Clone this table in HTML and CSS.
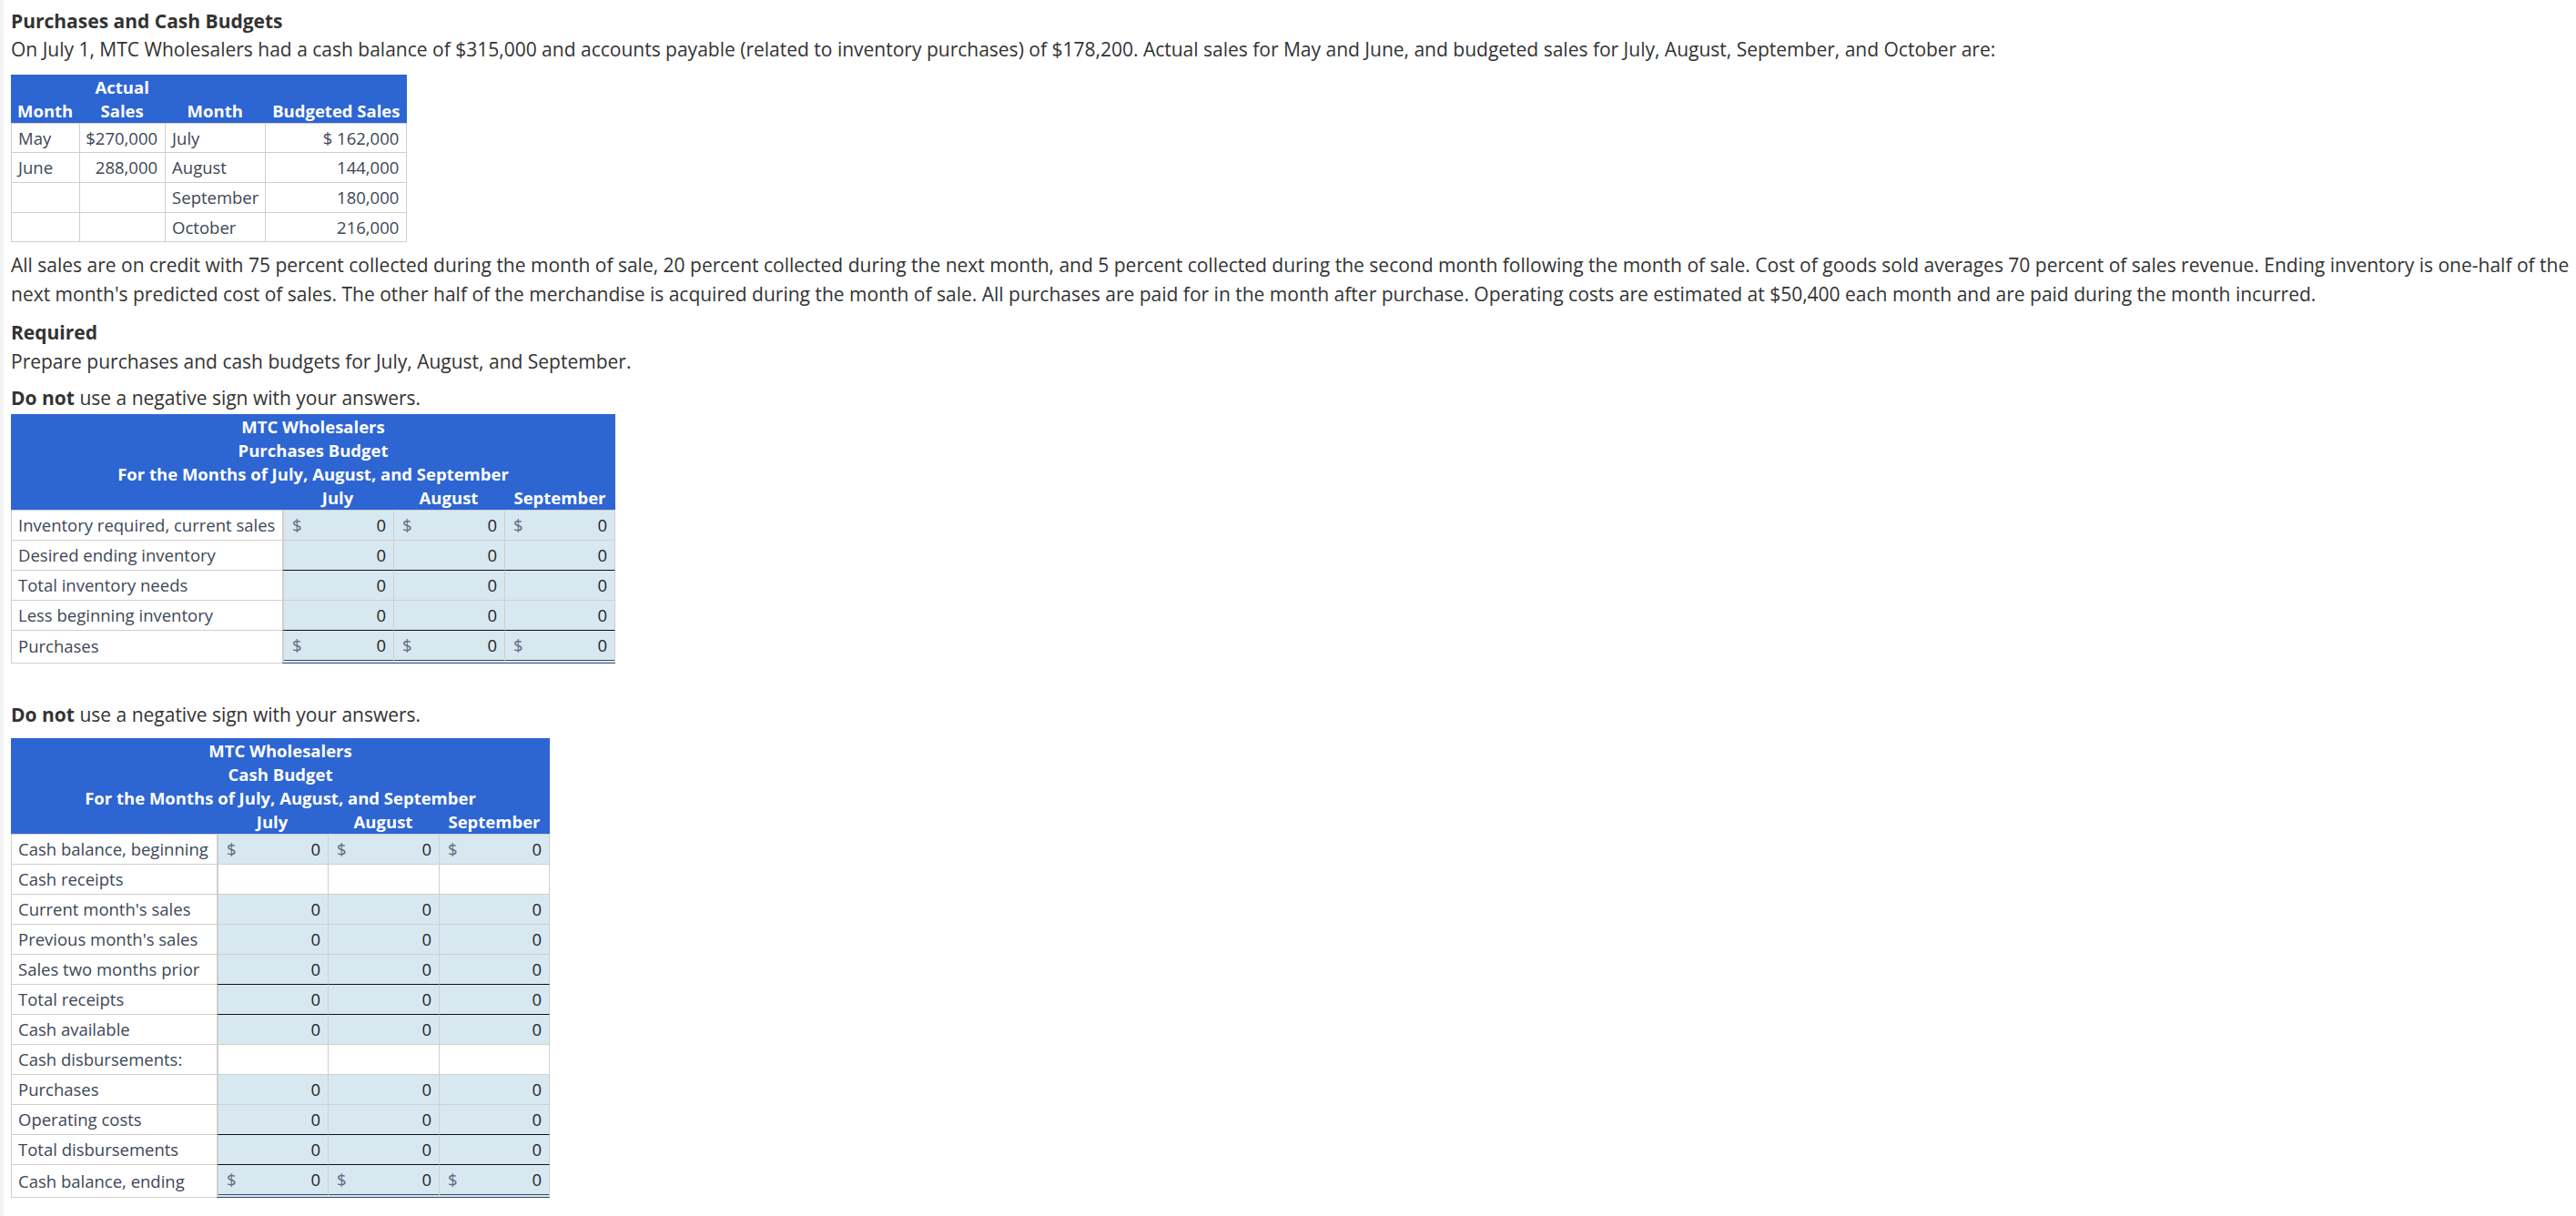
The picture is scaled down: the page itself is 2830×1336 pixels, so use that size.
FILE: index.html
```html
<!DOCTYPE html>
<html>

<head>
    <title>Purchases and Cash Budgets</title>
    <link rel="stylesheet" href="styles.css">
</head>

<body>
    <div class="page">
        <h1 class="title">Purchases and Cash Budgets</h1>
        <p class="intro">On July 1, MTC Wholesalers had a cash balance of $315,000 and accounts payable (related to inventory purchases) of $178,200. Actual sales for May and June, and budgeted sales for July, August, September, and October are:</p>

        <table class="sheet sales">
            <colgroup>
                <col class="c-month">
                <col class="c-actual">
                <col class="c-month2">
                <col class="c-budget">
            </colgroup>
            <thead>
                <tr>
                    <th>Month</th>
                    <th>Actual<br>Sales</th>
                    <th>Month</th>
                    <th>Budgeted Sales</th>
                </tr>
            </thead>
            <tbody>
                <tr><td class="lbl">May</td><td class="num">$270,000</td><td class="lbl">July</td><td class="num">$ 162,000</td></tr>
                <tr><td class="lbl">June</td><td class="num">288,000</td><td class="lbl">August</td><td class="num">144,000</td></tr>
                <tr><td class="lbl"></td><td class="num"></td><td class="lbl">September</td><td class="num">180,000</td></tr>
                <tr><td class="lbl"></td><td class="num"></td><td class="lbl">October</td><td class="num">216,000</td></tr>
            </tbody>
        </table>

        <p class="body-text">All sales are on credit with 75 percent collected during the month of sale, 20 percent collected during the next month, and 5 percent collected during the second month following the month of sale. Cost of goods sold averages 70 percent of sales revenue. Ending inventory is one-half of the next month's predicted cost of sales. The other half of the merchandise is acquired during the month of sale. All purchases are paid for in the month after purchase. Operating costs are estimated at $50,400 each month and are paid during the month incurred.</p>

        <h2 class="req">Required</h2>
        <p class="task">Prepare purchases and cash budgets for July, August, and September.</p>

        <p class="note"><b>Do not</b> use a negative sign with your answers.</p>

        <table class="sheet budget purchases">
            <colgroup>
                <col class="c-label">
                <col class="c-val">
                <col class="c-val">
                <col class="c-val">
            </colgroup>
            <thead>
                <tr><th colspan="4">MTC Wholesalers</th></tr>
                <tr><th colspan="4">Purchases Budget</th></tr>
                <tr><th colspan="4">For the Months of July, August, and September</th></tr>
                <tr><th></th><th>July</th><th>August</th><th>September</th></tr>
            </thead>
            <tbody>
                <tr>
                    <td class="lbl">Inventory required, current sales</td>
                    <td class="v first"><span class="cur">$</span>0</td>
                    <td class="v"><span class="cur">$</span>0</td>
                    <td class="v"><span class="cur">$</span>0</td>
                </tr>
                <tr>
                    <td class="lbl">Desired ending inventory</td>
                    <td class="v first">0</td><td class="v">0</td><td class="v">0</td>
                </tr>
                <tr class="total">
                    <td class="lbl">Total inventory needs</td>
                    <td class="v first">0</td><td class="v">0</td><td class="v">0</td>
                </tr>
                <tr>
                    <td class="lbl">Less beginning inventory</td>
                    <td class="v first">0</td><td class="v">0</td><td class="v">0</td>
                </tr>
                <tr class="total final">
                    <td class="lbl">Purchases</td>
                    <td class="v first"><span class="cur">$</span>0</td>
                    <td class="v"><span class="cur">$</span>0</td>
                    <td class="v"><span class="cur">$</span>0</td>
                </tr>
            </tbody>
        </table>

        <p class="note second"><b>Do not</b> use a negative sign with your answers.</p>

        <table class="sheet budget cash">
            <colgroup>
                <col class="c-label">
                <col class="c-val">
                <col class="c-val">
                <col class="c-val">
            </colgroup>
            <thead>
                <tr><th colspan="4">MTC Wholesalers</th></tr>
                <tr><th colspan="4">Cash Budget</th></tr>
                <tr><th colspan="4">For the Months of July, August, and September</th></tr>
                <tr><th></th><th>July</th><th>August</th><th>September</th></tr>
            </thead>
            <tbody>
                <tr>
                    <td class="lbl">Cash balance, beginning</td>
                    <td class="v first"><span class="cur">$</span>0</td>
                    <td class="v"><span class="cur">$</span>0</td>
                    <td class="v"><span class="cur">$</span>0</td>
                </tr>
                <tr>
                    <td class="lbl">Cash receipts</td>
                    <td class="blank first"></td><td class="blank"></td><td class="blank"></td>
                </tr>
                <tr>
                    <td class="lbl">Current month's sales</td>
                    <td class="v first">0</td><td class="v">0</td><td class="v">0</td>
                </tr>
                <tr>
                    <td class="lbl">Previous month's sales</td>
                    <td class="v first">0</td><td class="v">0</td><td class="v">0</td>
                </tr>
                <tr>
                    <td class="lbl">Sales two months prior</td>
                    <td class="v first">0</td><td class="v">0</td><td class="v">0</td>
                </tr>
                <tr class="total">
                    <td class="lbl">Total receipts</td>
                    <td class="v first">0</td><td class="v">0</td><td class="v">0</td>
                </tr>
                <tr class="total">
                    <td class="lbl">Cash available</td>
                    <td class="v first">0</td><td class="v">0</td><td class="v">0</td>
                </tr>
                <tr>
                    <td class="lbl">Cash disbursements:</td>
                    <td class="blank first"></td><td class="blank"></td><td class="blank"></td>
                </tr>
                <tr>
                    <td class="lbl">Purchases</td>
                    <td class="v first">0</td><td class="v">0</td><td class="v">0</td>
                </tr>
                <tr>
                    <td class="lbl">Operating costs</td>
                    <td class="v first">0</td><td class="v">0</td><td class="v">0</td>
                </tr>
                <tr class="total">
                    <td class="lbl">Total disbursements</td>
                    <td class="v first">0</td><td class="v">0</td><td class="v">0</td>
                </tr>
                <tr class="total final">
                    <td class="lbl">Cash balance, ending</td>
                    <td class="v first"><span class="cur">$</span>0</td>
                    <td class="v"><span class="cur">$</span>0</td>
                    <td class="v"><span class="cur">$</span>0</td>
                </tr>
            </tbody>
        </table>
    </div>
</body>

</html>
```

FILE: styles.css
```css
body {
    margin: 0;
    background-color: white;
    font-family: 'Open Sans', 'Noto Sans', sans-serif;
    color: #333;
}

.page {
    border-left: 4px solid #f4f4f4;
    padding: 7px 0 30px 8px;
    min-height: 1300px;
}

.title {
    font-size: 21px;
    line-height: 32px;
    font-weight: 700;
    margin: 0;
}

.intro,
.body-text,
.task,
.note {
    font-size: 21px;
    line-height: 31.5px;
    margin: 0;
}

.intro {
    margin-bottom: 11px;
}

.body-text {
    margin-top: 10px;
}

.req {
    font-size: 21px;
    line-height: 31.5px;
    font-weight: 700;
    margin: 11px 0 0 0;
}

.note {
    margin-top: 9px;
    margin-bottom: 1px;
}

.note.second {
    margin-top: 41px;
    margin-bottom: 10px;
}

/* tables */

.sheet {
    border-collapse: separate;
    border-spacing: 0;
    table-layout: fixed;
    font-size: 18.5px;
    line-height: 26px;
}

.sheet th {
    background-color: #2d65d3;
    color: white;
    font-weight: 700;
    text-align: center;
    padding: 0 7px;
    white-space: nowrap;
}

.sheet thead tr:first-child th {
    padding-top: 1px;
}

.sheet.sales th {
    vertical-align: bottom;
}

.sheet td {
    border-top: 1px solid #cfcfcf;
    border-left: 1px solid #cfcfcf;
    padding: 3px 7px 3px 7px;
    white-space: nowrap;
    color: #3d4757;
}

.sheet.sales td {
    line-height: 25.7px;
}

.sheet td:last-child {
    border-right: 1px solid #cfcfcf;
}

.sheet tbody tr:last-child td {
    border-bottom: 1px solid #cfcfcf;
}

.sheet td.num {
    text-align: right;
    padding-left: 6px;
    padding-right: 8px;
}

.c-month { width: 75px; }
.c-actual { width: 93px; }
.c-month2 { width: 109px; }
.c-budget { width: 156px; }

.purchases .c-label { width: 298px; }
.cash .c-label { width: 226px; }
.c-val { width: 122px; }

.budget td.v {
    background-color: #d8e8f0;
    text-align: right;
    color: #1f1f1f;
    padding-right: 8px;
}

.budget td.first {
    border-left: 2px solid #cfcfcf;
}

.budget td.blank {
    background-color: white;
}

.cur {
    float: left;
    color: #5d6b7c;
    padding-left: 2px;
}

.budget tr.total td.v {
    border-top: 1px solid #111;
}

.budget tr.final td.v {
    border-bottom: 4px double #3a4a6c;
}
```
